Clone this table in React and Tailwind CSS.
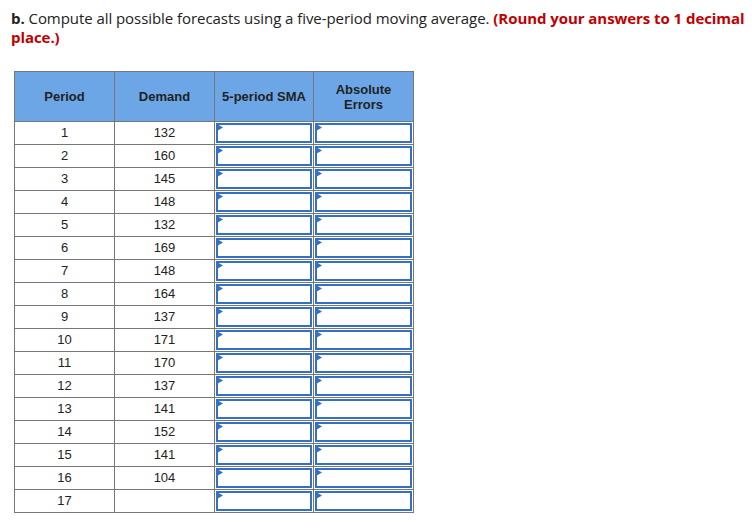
import React from 'react';

const rows = [
  [1, 132], [2, 160], [3, 145], [4, 148], [5, 132], [6, 169], [7, 148], [8, 164],
  [9, 137], [10, 171], [11, 170], [12, 137], [13, 141], [14, 152], [15, 141], [16, 104], [17, ''],
];

// cellule de saisie avec le petit triangle bleu
const InputCell = () => (
  <td className="border border-[#777] p-0 h-[22px]">
    <div className="relative h-[22px] p-[1px]">
      <div className="h-full w-full border-2 border-[#3470c4] bg-white"></div>
      <svg className="absolute left-[2px] top-[2px]" width="6" height="7" viewBox="0 0 6 7">
        <path d="M0 0 L6 3.5 L0 7 Z" fill="#3470c4" />
      </svg>
    </div>
  </td>
);

export default function App() {
  return (
    <div className="bg-white min-h-[532px] w-[752px] pl-[11px] pt-[9px]" style={{ fontFamily: '"Open Sans", Lato, sans-serif' }}>
      <p className="text-[15px] leading-[19px] text-[#222] tracking-[-0.06px] whitespace-nowrap">
        <span className="font-bold">b.</span> Compute all possible forecasts using a five-period moving average.{' '}
        <span className="font-bold text-[#c00000]">(Round your answers to 1 decimal</span>
        <br />
        <span className="font-bold text-[#c00000]">place.)</span>
      </p>

      <table
        className="mt-[24px] ml-[3px] border-collapse table-fixed text-[13px] text-[#222]"
        style={{ fontFamily: '"Liberation Sans", Arial, sans-serif' }}
      >
        <colgroup>
          <col className="w-[100px]" />
          <col className="w-[100px]" />
          <col className="w-[99px]" />
          <col className="w-[100px]" />
        </colgroup>
        <thead>
          <tr className="bg-[#6ca6e6] h-[50px]">
            <th className="border border-[#777] font-bold leading-[15px]">Period</th>
            <th className="border border-[#777] font-bold leading-[15px]">Demand</th>
            <th className="border border-[#777] font-bold leading-[15px]">5-period SMA</th>
            <th className="border border-[#777] font-bold leading-[15px]">Absolute<br />Errors</th>
          </tr>
        </thead>
        <tbody>
          {rows.map(([p, d]) => (
            <tr key={p} className="h-[22px]">
              <td className="border border-[#777] text-center p-0">{p}</td>
              <td className="border border-[#777] text-center p-0">{d}</td>
              <InputCell />
              <InputCell />
            </tr>
          ))}
        </tbody>
      </table>
    </div>
  );
}
